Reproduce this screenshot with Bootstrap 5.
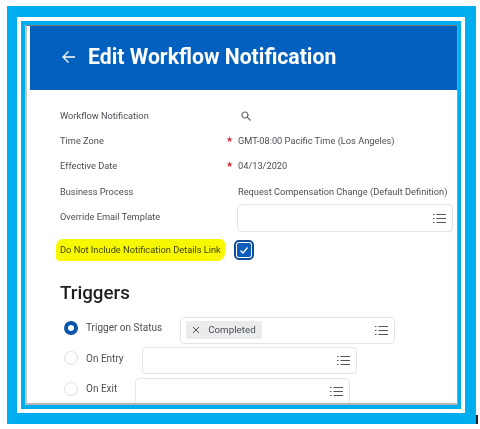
<!DOCTYPE html>
<html lang="en">
<head>
<meta charset="utf-8">
<link href="https://cdn.jsdelivr.net/npm/bootstrap@5.3.0/dist/css/bootstrap.min.css" rel="stylesheet">
<style>
html,body{margin:0;background:#fff;height:429px;overflow:hidden;font-family:Roboto,"Liberation Sans",sans-serif}
.frame-outer{margin:6px 4px 5px 7px;height:418px;background:#00aeef;padding:11px 11px 11px 10px;position:relative}
.tick{position:absolute;left:469px;top:409px;width:2px;height:9px;background:#222}
.frame-white{height:100%;background:#fff;padding:4px}
.frame-inner{height:100%;background:#00aeef;padding:4px 3px 4px 4px}
.sheet{height:100%;background:#fff;overflow:hidden;border-left:2px solid #c4c4c4;border-top:1px solid #777;border-right:1px solid #999;border-bottom:2px solid #b5b5b5;filter:blur(.4px)}
.head-bar{height:64px;margin-left:3px;background:#0460be;color:#fff;padding-left:31px;gap:12px;padding-bottom:2px}
.head-bar h1{font-size:21.2px;font-weight:700;margin:0;line-height:1;font-family:Roboto,sans-serif}
.form-zone{padding:0 4px 0 33px;font-size:9.25px;color:#4a4f54;white-space:nowrap}
.line{height:25.3px}
.lab{width:177px;flex:none;position:relative}
.val{margin-left:1px}
.req{color:#e22c3a;position:absolute;right:4px;top:0;font-size:8px;line-height:11px}
.box{height:27px;border:1px solid #e3e3e3;border-radius:4px;width:215px;flex:none;padding-right:6px}
.box-wide{width:216px;height:28px}
.lift{padding-bottom:3px}
.hl{background:#f8f800;border-radius:7px 5px 8px 4px;padding:5px 4px 6px;margin-left:-4px;color:#3d4200}
.chk{width:20px;height:20px;border:2px solid #0d4a9a;border-radius:5px;background:#fff;padding:1px;margin-left:-3px}
.chk i{display:block;width:100%;height:100%;background:#0d5cbc;border-radius:2px}
.chk svg{display:block}
h2.trig{font-size:18.8px;font-weight:500;color:#1c1f22;margin:25px 0 12px;line-height:1;font-family:Roboto,sans-serif}
.radio{width:14px;height:14px;border-radius:50%;border:1px solid #dfdfdf;flex:none;background:#fff;margin-bottom:5px}
.radio.on{border:4px solid #0a54ac}
.trow{height:30.500px;padding-left:4px;font-size:10px}
.trow .rl{margin-left:8px;margin-right:18px;margin-bottom:5px}
.tag{background:#e9ebed;height:18px;padding:0 6px;border-radius:2px;margin-left:5px;gap:8px;font-size:9.8px}
</style>
</head>
<body>
<div class="frame-outer"><div class="frame-white"><div class="frame-inner"><div class="sheet">
  <header class="head-bar d-flex align-items-center">
    <svg width="15" height="14" viewBox="0 0 15 14" fill="none" stroke="#fff" stroke-width="1.3"><path d="M14 7H2M7.500 1.500 2 7l5.500 5.500"/></svg>
    <h1>Edit Workflow Notification</h1>
  </header>
  <div class="form-zone">
    <div class="line d-flex align-items-center" style="margin-top:13px">
      <div class="lab">Workflow Notification</div>
      <svg width="10" height="10" viewBox="0 0 10 10" fill="none" stroke="#666" stroke-width="1.200" style="margin-left:4px"><circle cx="4" cy="4" r="3"/><path d="M6.200 6.200 9.500 9.500"/></svg>
    </div>
    <div class="line d-flex align-items-center"><div class="lab">Time Zone<span class="req">★</span></div><div class="val">GMT-08:00 Pacific Time (Los Angeles)</div></div>
    <div class="line d-flex align-items-center"><div class="lab">Effective Date<span class="req">★</span></div><div class="val">04/13/2020</div></div>
    <div class="line d-flex align-items-center"><div class="lab">Business Process</div><div class="val">Request Compensation Change (Default Definition)</div></div>
    <div class="d-flex align-items-center" style="height:28px;margin-bottom:9px">
      <div class="lab lift">Override Email Template</div>
      <div class="box box-wide d-flex align-items-center justify-content-end"><svg width="13" height="11" viewBox="0 0 13 11" fill="none" stroke="#555" stroke-width="1.100"><path d="M0 1.500h1.500M3.500 1.500h9.500M0 5.500h1.500M3.500 5.500h9.500M0 9.500h1.500M3.500 9.500h9.500"/></svg></div>
    </div>
    <div class="d-flex align-items-center" style="height:18px">
      <div class="lab"><span class="hl">Do Not Include Notification Details Link</span></div>
      <div class="chk"><i><svg width="14" height="14" viewBox="0 0 14 14" fill="none" stroke="#fff" stroke-width="1.200"><path d="M3.500 7.500 6 10l4.500-5.500"/></svg></i></div>
    </div>
    <h2 class="trig">Triggers</h2>
    <div class="trow d-flex align-items-center"><span class="radio on"></span><span class="rl">Trigger on Status</span>
      <div class="box d-flex align-items-center justify-content-between"><span class="tag d-flex align-items-center"><svg width="8" height="8" viewBox="0 0 8 8" stroke="#555" stroke-width="1"><path d="M1 1l6 6M7 1 1 7"/></svg>Completed</span><svg width="13" height="11" viewBox="0 0 13 11" fill="none" stroke="#555" stroke-width="1.100"><path d="M0 1.500h1.500M3.500 1.500h9.500M0 5.500h1.500M3.500 5.500h9.500M0 9.500h1.500M3.500 9.500h9.500"/></svg></div>
    </div>
    <div class="trow d-flex align-items-center"><span class="radio"></span><span class="rl">On Entry</span>
      <div class="box d-flex align-items-center justify-content-end"><svg width="13" height="11" viewBox="0 0 13 11" fill="none" stroke="#555" stroke-width="1.100"><path d="M0 1.500h1.500M3.500 1.500h9.500M0 5.500h1.500M3.500 5.500h9.500M0 9.500h1.500M3.500 9.500h9.500"/></svg></div>
    </div>
    <div class="trow d-flex align-items-center"><span class="radio"></span><span class="rl">On Exit</span>
      <div class="box d-flex align-items-center justify-content-end"><svg width="13" height="11" viewBox="0 0 13 11" fill="none" stroke="#555" stroke-width="1.100"><path d="M0 1.500h1.500M3.500 1.500h9.500M0 5.500h1.500M3.500 5.500h9.500M0 9.500h1.500M3.500 9.500h9.500"/></svg></div>
    </div>
  </div>
</div></div></div><div class="tick"></div></div>
<script src="https://cdn.jsdelivr.net/npm/bootstrap@5.3.0/dist/js/bootstrap.bundle.min.js"></script>
</body>
</html>
